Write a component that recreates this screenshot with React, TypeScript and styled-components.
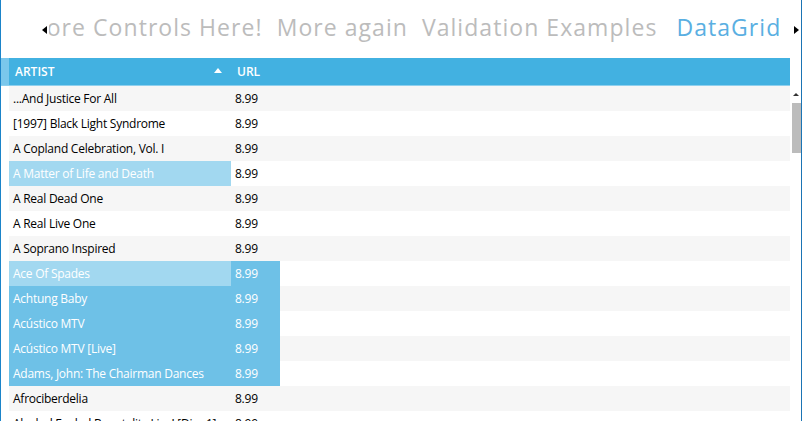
import React from "react";
import styled, { createGlobalStyle } from "styled-components";

const GlobalStyle = createGlobalStyle`
  html, body {
    margin: 0;
    padding: 0;
    background: #fff;
    overflow: hidden;
  }
  * {
    box-sizing: border-box;
  }
`;

const tabs = [
  { label: "More Controls Here!", active: false },
  { label: "More again", active: false },
  { label: "Validation Examples", active: false },
  { label: "DataGrid", active: true },
];

const albums = [
  { name: "...And Justice For All", sel: false, current: false },
  { name: "[1997] Black Light Syndrome", sel: false, current: false },
  { name: "A Copland Celebration, Vol. I", sel: false, current: false },
  { name: "A Matter of Life and Death", sel: false, current: true },
  { name: "A Real Dead One", sel: false, current: false },
  { name: "A Real Live One", sel: false, current: false },
  { name: "A Soprano Inspired", sel: false, current: false },
  { name: "Ace Of Spades", sel: true, current: true },
  { name: "Achtung Baby", sel: true, current: false },
  { name: "Acústico MTV", sel: true, current: false },
  { name: "Acústico MTV [Live]", sel: true, current: false },
  { name: "Adams, John: The Chairman Dances", sel: true, current: false },
  { name: "Afrociberdelia", sel: false, current: false },
  { name: "Alcohol Fueled Brewtality Live! [Disc 1]", sel: false, current: false },
];

// how far the tab strip is scrolled to the left
const tabScroll = 24;

const App = () => {
  return (
    <Window>
      <GlobalStyle />
      <TabStrip>
        <ArrowButton $side="left">
          <Triangle $dir="left" />
        </ArrowButton>
        <TabViewport>
          <TabRow style={{ marginLeft: -tabScroll }}>
            {tabs.map((t) => (
              <Tab key={t.label} $active={t.active}>
                {t.label}
              </Tab>
            ))}
          </TabRow>
        </TabViewport>
        <ArrowButton $side="right">
          <Triangle $dir="right" />
        </ArrowButton>
      </TabStrip>

      <GridArea>
        <Grid>
          <HeaderRow>
            <HeaderCorner />
            <HeaderCell $width={222}>
              ARTIST
              <SortArrow />
            </HeaderCell>
            <HeaderCell $width={49}>URL</HeaderCell>
            <HeaderFiller />
          </HeaderRow>
          <Rows>
            {albums.map((a, i) => (
              <Row key={a.name}>
                <RowHeader />
                <RowBody $alt={i % 2 === 0}>
                  <Cell $width={222} $sel={a.sel} $current={a.current}>
                    {a.name}
                  </Cell>
                  <Cell $width={49} $sel={a.sel}>
                    8.99
                  </Cell>
                </RowBody>
              </Row>
            ))}
          </Rows>
        </Grid>
        <ScrollBar>
          <ScrollUp />
          <Thumb />
        </ScrollBar>
      </GridArea>
    </Window>
  );
};

const Window = styled.div`
  width: 802px;
  height: 421px;
  border-left: 1px solid #1b84c9;
  border-right: 1px solid #1b74b4;
  display: flex;
  flex-direction: column;
  overflow: hidden;
  font-family: "Open Sans", "Noto Sans", sans-serif;
`;

const TabStrip = styled.div`
  height: 58px;
  display: flex;
  align-items: center;
  flex-shrink: 0;
`;

const ArrowButton = styled.div<{ $side: "left" | "right" }>`
  width: ${(p) => (p.$side === "left" ? "48px" : "12px")};
  height: 100%;
  display: flex;
  align-items: center;
  justify-content: ${(p) => (p.$side === "left" ? "flex-end" : "center")};
  padding-right: ${(p) => (p.$side === "left" ? "2px" : "0")};
  padding-left: ${(p) => (p.$side === "right" ? "3px" : "0")};
  padding-top: 1px;
  flex-shrink: 0;
`;

const Triangle = styled.span<{ $dir: "left" | "right" }>`
  width: 0;
  height: 0;
  border-top: 4px solid transparent;
  border-bottom: 4px solid transparent;
  ${(p) =>
    p.$dir === "left"
      ? "border-right: 5px solid #000;"
      : "border-left: 5px solid #000;"}
`;

const TabViewport = styled.div`
  flex: 1;
  overflow: hidden;
  height: 100%;
  display: flex;
  align-items: center;
`;

const TabRow = styled.div`
  display: flex;
  align-items: center;
  white-space: nowrap;
  gap: 14px;
`;

const Tab = styled.div<{ $active: boolean }>`
  font-size: 23px;
  font-weight: 400;
  letter-spacing: 1.05px;
  color: ${(p) => (p.$active ? "#5aafe2" : "#bcbcbc")};
  margin-left: ${(p) => (p.$active ? "5px" : "0")};
  line-height: 1;
  padding-bottom: 4px;
`;

const GridArea = styled.div`
  flex: 1;
  display: flex;
  min-height: 0;
`;

const Grid = styled.div`
  flex: 1;
  display: flex;
  flex-direction: column;
  min-width: 0;
`;

const HeaderRow = styled.div`
  height: 28px;
  display: flex;
  flex-shrink: 0;
  border-bottom: 1px solid #8fd0ee;
  background: #42b1e1;
`;

const HeaderCorner = styled.div`
  width: 8px;
  background: #7ac7ec;
`;

const HeaderCell = styled.div<{ $width: number }>`
  width: ${(p) => p.$width}px;
  position: relative;
  display: flex;
  align-items: center;
  padding-left: 6px;
  color: #fff;
  font-size: 12px;
  font-weight: 600;
`;

const SortArrow = styled.span`
  position: absolute;
  right: 9px;
  top: 10px;
  width: 0;
  height: 0;
  border-left: 4px solid transparent;
  border-right: 4px solid transparent;
  border-bottom: 5px solid #fff;
`;

const HeaderFiller = styled.div`
  flex: 1;
`;

const Rows = styled.div`
  flex: 1;
  overflow: hidden;
`;

const Row = styled.div`
  height: 25px;
  display: flex;
`;

const RowHeader = styled.div`
  width: 8px;
  background: #fff;
`;

const RowBody = styled.div<{ $alt: boolean }>`
  flex: 1;
  display: flex;
  background: ${(p) => (p.$alt ? "#f6f6f6" : "#fff")};
`;

const Cell = styled.div<{ $width: number; $sel: boolean; $current?: boolean }>`
  width: ${(p) => p.$width}px;
  display: flex;
  align-items: center;
  padding-left: 4px;
  font-size: 12px;
  letter-spacing: -0.25px;
  white-space: nowrap;
  overflow: hidden;
  color: ${(p) => (p.$sel || p.$current ? "#fff" : "#000")};
  background: ${(p) =>
    p.$current ? "#a2d8f0" : p.$sel ? "#6ec1e7" : "transparent"};
`;

const ScrollBar = styled.div`
  width: 11px;
  flex-shrink: 0;
  position: relative;
  padding-top: 35px;
  display: flex;
  flex-direction: column;
  align-items: center;
`;

const ScrollUp = styled.span`
  width: 0;
  height: 0;
  border-left: 3px solid transparent;
  border-right: 3px solid transparent;
  border-bottom: 3px solid #333;
  margin-left: 1px;
`;

const Thumb = styled.div`
  margin-top: 7px;
  margin-left: 1px;
  width: 9px;
  height: 50px;
  background: #bcbcbc;
`;

export default App;
